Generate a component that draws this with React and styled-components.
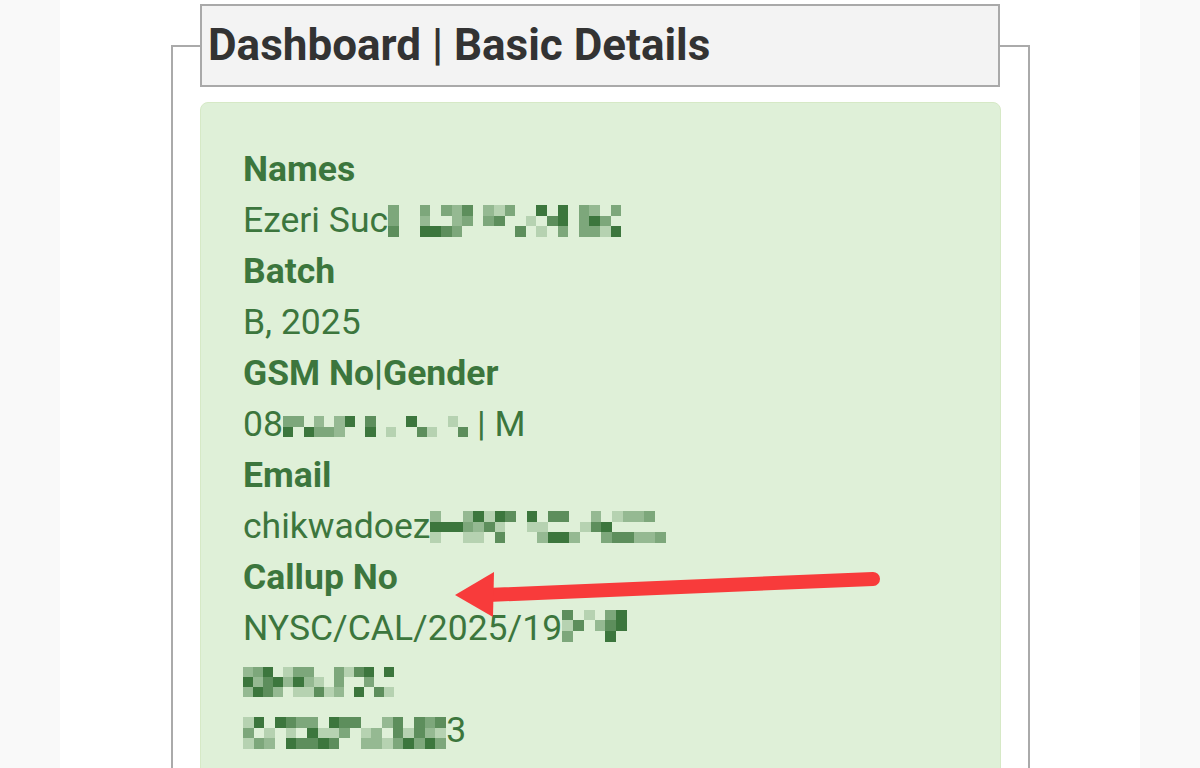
import React from 'react';
import styled, { createGlobalStyle } from 'styled-components';

const GlobalStyle = createGlobalStyle`
  html, body {
    margin: 0;
    padding: 0;
    background: #f9f9f9;
    font-family: Roboto, "Noto Sans", Arial, sans-serif;
  }
`;

// deterministic little PRNG so the mosaics look the same every run
function rng(seed) {
  let s = seed;
  return () => {
    s = (s * 9301 + 49297) % 233280;
    return s / 233280;
  };
}

const ALPHAS = [0.25, 0.45, 0.6, 0.8, 1];

function Mosaic({ cols, rows = 3, cell = 10.5, seed = 1, blank = 0.4, lift = -5 }) {
  const rand = rng(seed);
  const cells = [];
  for (let i = 0; i < cols * rows; i++) {
    const r = rand();
    const first = i % cols === 0;
    const a = r < blank && !first ? 0 : ALPHAS[Math.floor(rand() * ALPHAS.length)];
    cells.push(<Cell key={i} style={{ opacity: a }} />);
  }
  return (
    <MosaicBox $w={cols * cell} $h={rows * cell} $lift={lift}>
      <MosaicGrid $cols={cols} $cell={cell}>
        {cells}
      </MosaicGrid>
    </MosaicBox>
  );
}

function Arrow() {
  return (
    <ArrowLayer width="1200" height="768" viewBox="0 0 1200 768">
      <line x1="873" y1="579" x2="488" y2="595" stroke="#f83b3b" strokeWidth="14" strokeLinecap="round" />
      <polygon points="455,595 494,572 493,617" fill="#f83b3b" />
    </ArrowLayer>
  );
}

export default function App() {
  return (
    <Page>
      <GlobalStyle />
      <Column>
        <Fieldset>
          <Legend>Dashboard | Basic Details</Legend>
          <Alert>
            <Label>Names</Label>
            <Value>
              Ezeri Suc<Mosaic cols={22} cell={10.6} seed={7} />
            </Value>
            <Label>Batch</Label>
            <Value>B, 2025</Value>
            <Label>GSM No|Gender</Label>
            <Value>
              08<Mosaic cols={18} cell={10.3} rows={2} seed={13} lift={-1} /> | M
            </Value>
            <Label>Email</Label>
            <Value>
              chikwadoez<Mosaic cols={22} cell={10.7} seed={21} />
            </Value>
            <Label>Callup No</Label>
            <Value>
              NYSC/CAL/2025/19<Mosaic cols={6} cell={10.8} seed={31} lift={-2} />
            </Value>
            <Label>
              <Mosaic cols={16} cell={10.1} rows={3} seed={45} blank={0.3} lift={-6} />
            </Label>
            <Value>
              <Mosaic cols={19} cell={10.7} seed={52} blank={0.35} lift={-7} />3
            </Value>
            <Label>&nbsp;</Label>
          </Alert>
        </Fieldset>
      </Column>
      <Arrow />
    </Page>
  );
}

const Page = styled.div`
  position: relative;
  height: 768px;
  background: #f9f9f9;
  overflow: hidden;
`;

const Column = styled.div`
  width: 1080px;
  margin-left: 60px;
  min-height: 768px;
  background: #ffffff;
  padding-top: 4px;
  box-sizing: border-box;
`;

const Fieldset = styled.fieldset`
  margin: 0 0 0 111px;
  width: 859px;
  box-sizing: border-box;
  border: 2px solid #aaaaaa;
  padding: 15px 27px 0 27px;
`;

const Legend = styled.legend`
  box-sizing: border-box;
  width: 800px;
  height: 83px;
  margin: 0;
  padding: 0 6px;
  background: #f3f3f3;
  border: 2px solid #a9a9a9;
  font-family: Roboto, "Noto Sans", Arial, sans-serif;
  font-weight: 700;
  font-size: 44px;
  line-height: 79px;
  color: #333333;
  white-space: nowrap;
`;

const Alert = styled.div`
  background: #dff0d8;
  border: 1px solid #d6e9c6;
  border-radius: 8px;
  padding: 41px 42px 60px 42px;
  color: #3c763d;
  font-size: 35.5px;
  line-height: 51px;
`;

const Label = styled.div`
  font-weight: 700;
  white-space: nowrap;
  height: 51px;
`;

const Value = styled.div`
  font-weight: 400;
  white-space: nowrap;
  height: 51px;
`;

const MosaicBox = styled.span`
  display: inline-block;
  overflow: hidden;
  width: ${(p) => p.$w}px;
  height: ${(p) => p.$h}px;
  line-height: 0;
  vertical-align: ${(p) => p.$lift}px;
`;

const MosaicGrid = styled.span`
  display: grid;
  grid-template-columns: repeat(${(p) => p.$cols}, ${(p) => p.$cell}px);
  grid-auto-rows: ${(p) => p.$cell}px;
`;

const Cell = styled.span`
  display: block;
  background: #3c763d;
`;

const ArrowLayer = styled.svg`
  position: absolute;
  top: 0;
  left: 0;
  pointer-events: none;
`;
